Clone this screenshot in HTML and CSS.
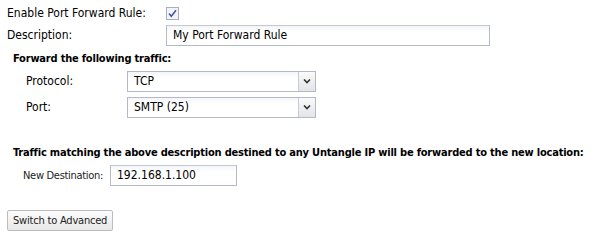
FILE: index.html
```html
<!DOCTYPE html>
<html lang="en">
<head>
  <meta charset="UTF-8" />
  <title>Port Forward Rule</title>
  <link rel="stylesheet" href="styles.css">
</head>
<body>
  <div class="pf-form">
    <div class="pf-row pf-row-top">
      <label class="pf-label pf-label-wide">Enable Port Forward Rule:</label>
      <span class="pf-check"><svg width="13" height="13" viewBox="0 0 13 13"><rect x="0.5" y="0.5" width="12" height="12" fill="#f2f4f8" stroke="#a8adc0"/><path d="M3 6.5 L5.3 9.2 L10 3.2" fill="none" stroke="#3d54a6" stroke-width="1.5"/></svg></span>
    </div>
    <div class="pf-row">
      <label class="pf-label pf-label-wide">Description:</label>
      <input class="pf-text pf-desc" type="text" value="My Port Forward Rule">
    </div>

    <div class="pf-section">
      <div class="pf-title">Forward the following traffic:</div>
      <div class="pf-row pf-row-sel">
        <label class="pf-label pf-label-sel">Protocol:</label>
        <div class="pf-combo"><span class="pf-combo-text">TCP</span><span class="pf-trigger"><svg width="8" height="5" viewBox="0 0 8 5"><path d="M1 0.5 L4 3.5 L7 0.5" fill="none" stroke="#333" stroke-width="1.6"/></svg></span></div>
      </div>
      <div class="pf-row pf-row-sel">
        <label class="pf-label pf-label-sel">Port:</label>
        <div class="pf-combo"><span class="pf-combo-text">SMTP (25)</span><span class="pf-trigger"><svg width="8" height="5" viewBox="0 0 8 5"><path d="M1 0.5 L4 3.5 L7 0.5" fill="none" stroke="#333" stroke-width="1.6"/></svg></span></div>
      </div>
    </div>

    <div class="pf-section pf-section-dest">
      <div class="pf-title">Traffic matching the above description destined to any Untangle IP will be forwarded to the new location:</div>
      <div class="pf-row pf-row-dest">
        <label class="pf-label pf-label-dest">New Destination:</label>
        <input class="pf-text pf-dest" type="text" value="192.168.1.100">
      </div>
    </div>

    <button class="pf-button">Switch to Advanced</button>
  </div>
</body>
</html>
```

FILE: styles.css
```css
body {
  margin: 0;
  background: #fff;
  font-family: "DejaVu Sans Condensed", "DejaVu Sans", sans-serif;
  font-size: 12px;
  color: #000;
}

.pf-form {
  padding: 3px 0 0 7px;
}

.pf-row {
  display: flex;
  align-items: center;
  height: 24px;
}

.pf-row-top {
  height: 20px;
}

.pf-label-wide {
  width: 159px;
}

.pf-check {
  display: flex;
  width: 13px;
  height: 13px;
}

.pf-text {
  box-sizing: border-box;
  height: 21px;
  border: 1px solid #b5b8c8;
  border-top-color: #c4c7d4;
  background: linear-gradient(#f4f5f8, #fff 6px);
  font: inherit;
  padding: 0 6px;
  margin: 0;
  outline: none;
  color: #000;
}

.pf-desc {
  width: 324px;
}

.pf-section {
  padding: 3px 0 0 6px;
}

.pf-title {
  font-weight: bold;
  font-size: 11px;
  letter-spacing: -0.2px;
  white-space: nowrap;
  height: 18px;
  line-height: 18px;
}

.pf-row-sel {
  height: 26px;
  padding-left: 13px;
}

.pf-label-sel {
  width: 101px;
}

.pf-combo {
  display: flex;
  box-sizing: border-box;
  width: 189px;
  height: 21px;
  border: 1px solid #b5b8c8;
  background: linear-gradient(#f4f5f8, #fff 6px);
}

.pf-combo-text {
  flex: 1;
  padding: 0 6px;
  line-height: 19px;
}

.pf-trigger {
  width: 16px;
  display: flex;
  align-items: center;
  justify-content: center;
  border-left: 1px solid #c8cad4;
  background: linear-gradient(#fafafa, #e3e4e8);
}

.pf-section-dest {
  padding-top: 24px;
}

.pf-row-dest {
  height: 26px;
  padding-left: 10px;
  font-size: 11px;
}

.pf-label-dest {
  flex: 0 0 87px;
  min-width: 0;
  white-space: nowrap;
  letter-spacing: -0.3px;
  color: #222;
}

.pf-dest {
  width: 127px;
  font-size: 12px;
}

.pf-button {
  margin-top: 22px;
  height: 21px;
  padding: 0 5px;
  font: inherit;
  font-size: 11px;
  letter-spacing: -0.2px;
  color: #222;
  border: 1px solid #bbb;
  border-radius: 2px;
  background: linear-gradient(#fcfcfc, #e8e8e8);
}
```
